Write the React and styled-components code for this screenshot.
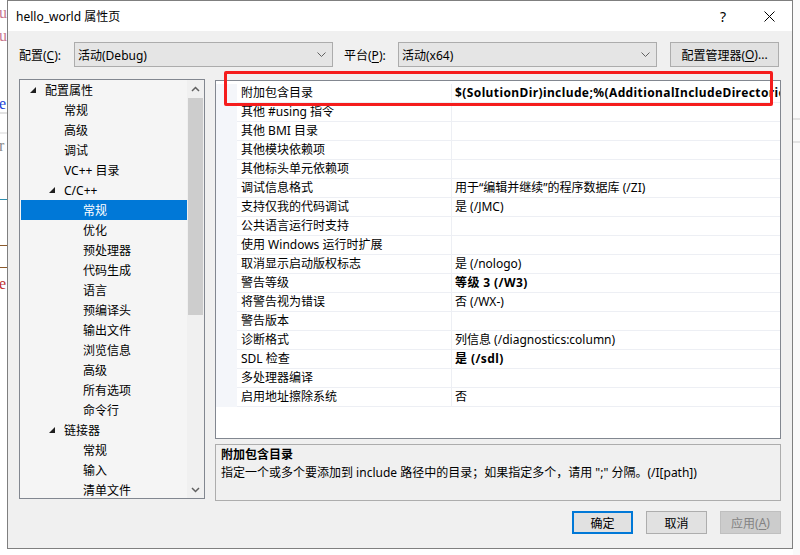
import React from 'react';
import styled, { createGlobalStyle } from 'styled-components';

const GlobalStyle = createGlobalStyle`
  html, body { margin: 0; padding: 0; background: #fff; }
  body {
    font-family: "Noto Sans", "Noto Sans CJK SC", sans-serif;
    font-size: 12px;
    color: #000;
  }
`;

const Screen = styled.div`
  display: flex;
  width: 800px;
  height: 555px;
  overflow: hidden;
  background: #fff;
`;

/* slivers of the editor window peeking out on both sides */
const EditorEdge = styled.div`
  width: 7px;
  flex: none;
  overflow: hidden;
  display: flex;
  flex-direction: column;
  background: ${p => p.$bg || '#fff'};
`;

const EdgeLine = styled.div`
  flex: none;
  height: ${p => p.$h}px;
  line-height: ${p => p.$h}px;
  background: ${p => p.$bg || 'transparent'};
  color: ${p => p.$color || '#000'};
  font-family: "Liberation Serif", serif;
  font-size: 16px;
  white-space: nowrap;
  text-indent: -1px;
`;

const Dialog = styled.div`
  width: 786px;
  height: 549px;
  flex: none;
  box-sizing: border-box;
  border: 1px solid #7f7f7f;
  background: #f0f0f0;
  display: flex;
  flex-direction: column;
`;

const TitleBar = styled.div`
  height: 30px;
  flex: none;
  background: #fff;
  display: flex;
  align-items: center;
  padding-left: 8px;
`;

const Title = styled.div`
  flex: 1;
  font-size: 12px;
`;

const TitleButton = styled.div`
  width: 46px;
  height: 30px;
  display: flex;
  align-items: center;
  justify-content: center;
  font-size: 14px;
`;

const Body = styled.div`
  flex: 1;
  display: flex;
  flex-direction: column;
  padding: 11px 11px 14px 11px;
`;

const ConfigRow = styled.div`
  display: flex;
  align-items: center;
  height: 25px;
`;

const FieldLabel = styled.div`
  width: ${p => p.$w}px;
  flex: none;
  margin-left: ${p => p.$gap || 0}px;
`;

const Combo = styled.div`
  width: 259px;
  height: 25px;
  box-sizing: border-box;
  border: 1px solid #acacac;
  background: #e5e5e5;
  display: flex;
  align-items: center;
  justify-content: space-between;
  padding: 0 6px 0 3px;
`;

const PushButton = styled.div`
  width: ${p => p.$w}px;
  height: ${p => p.$h || 23}px;
  box-sizing: border-box;
  margin-left: ${p => p.$gap || 0}px;
  display: flex;
  align-items: center;
  justify-content: center;
  background: ${p => (p.$disabled ? '#cccccc' : '#e1e1e1')};
  color: ${p => (p.$disabled ? '#838383' : '#000')};
  border: ${p => (p.$default ? '2px solid #0078d7' : p.$disabled ? '1px solid #bfbfbf' : '1px solid #adadad')};
`;

const Key = styled.span`
  text-decoration: underline;
  text-underline-offset: 2px;
`;

const Main = styled.div`
  display: flex;
  gap: 10px;
  height: 422px;
  margin-top: 12px;
`;

const Tree = styled.div`
  width: 186px;
  height: 420px;
  flex: none;
  box-sizing: border-box;
  border: 1px solid #828790;
  background: #f5f5f5;
  display: flex;
  overflow: hidden;
`;

const TreeList = styled.div`
  flex: 1;
  overflow: hidden;
`;

const TreeRow = styled.div`
  height: 20px;
  display: flex;
  align-items: center;
  padding-left: ${p => 10 + p.$level * 19}px;
  margin-left: ${p => (p.$selected ? 1 : 0)}px;
  background: ${p => (p.$selected ? '#0078d7' : 'transparent')};
  color: ${p => (p.$selected ? '#fff' : '#000')};
  white-space: nowrap;
`;

const Toggle = styled.span`
  width: ${p => (p.$selected ? 14 : 15)}px;
  flex: none;
  display: flex;
  align-items: center;
`;

const ScrollBar = styled.div`
  width: 17px;
  flex: none;
  background: #f0f0f0;
  display: flex;
  flex-direction: column;
`;

const ScrollArrow = styled.div`
  height: 17px;
  flex: none;
  display: flex;
  align-items: center;
  justify-content: center;
`;

const ScrollThumb = styled.div`
  height: 217px;
  margin: 1px 1px 0 1px;
  background: #cdcdcd;
`;

const ScrollTrack = styled.div`
  flex: 1;
`;

const RightColumn = styled.div`
  flex: 1;
  position: relative;
  display: flex;
  flex-direction: column;
  gap: 5px;
  padding-top: 1px;
`;

const Grid = styled.div`
  height: 359px;
  flex: none;
  box-sizing: border-box;
  border: 1px solid #828790;
  background: #fff;
  padding-top: 3px;
  overflow: hidden;
`;

const PropRow = styled.div`
  display: grid;
  grid-template-columns: 21px 215px 1fr;
  height: 19px;
`;

const Gutter = styled.div`
  background: #f4f6fa;
`;

const Cell = styled.div`
  box-sizing: border-box;
  height: 19px;
  line-height: 18px;
  border-bottom: 1px solid #edeff4;
  border-right: ${p => (p.$name ? '1px solid #edeff4' : 'none')};
  padding-left: ${p => (p.$name ? 4 : 3)}px;
  font-weight: ${p => (p.$bold ? 700 : 400)};
  letter-spacing: ${p => (p.$bold ? '0.4px' : 'normal')};
  white-space: nowrap;
  overflow: hidden;
`;

const Description = styled.div`
  flex: 1;
  box-sizing: border-box;
  border: 1px solid #adadad;
  padding: 1px 5px 0;
  line-height: 18px;
`;

const DescTitle = styled.div`
  font-weight: 700;
`;

const Highlight = styled.div`
  position: absolute;
  left: 9px;
  top: -8px;
  width: 549px;
  height: 35px;
  box-sizing: border-box;
  border: 3px solid #f51d1d;
  border-radius: 2px;
  pointer-events: none;
`;

const ButtonRow = styled.div`
  display: flex;
  justify-content: flex-end;
  margin-top: 10px;
`;

const Chevron = ({ up }) => (
  <svg width="9" height="6" viewBox="0 0 9 6">
    <path
      d={up ? 'M1 5 L4.5 1.5 L8 5' : 'M1 1 L4.5 4.5 L8 1'}
      fill="none"
      stroke="#606060"
      strokeWidth="1.5"
    />
  </svg>
);

const ComboArrow = () => (
  <svg width="9" height="5" viewBox="0 0 9 5">
    <path d="M0.5 0.5 L4.5 4.5 L8.5 0.5" fill="none" stroke="#606060" strokeWidth="1" />
  </svg>
);

const Expanded = () => (
  <svg width="6" height="6" viewBox="0 0 6 6">
    <polygon points="6,0 6,6 0,6" fill="#1e1e1e" />
  </svg>
);

const CloseGlyph = () => (
  <svg width="11" height="11" viewBox="0 0 11 11">
    <path d="M0.5 0.5 L10.5 10.5 M10.5 0.5 L0.5 10.5" stroke="#000" strokeWidth="1" />
  </svg>
);

const leftEdge = [
  { h: 6 },
  { h: 14, g: 'u', c: '#c8798f' },
  { h: 9 },
  { h: 14, g: 'u', c: '#c8798f' },
  { h: 54 },
  { h: 13, g: 'e', c: '#1a3fd6' },
  { h: 2 },
  { h: 2, bg: '#e2e2e2' },
  { h: 18 },
  { h: 2, bg: '#ebebeb' },
  { h: 6 },
  { h: 12, g: 'r', c: '#8a8a8a' },
  { h: 47 },
  { h: 1, bg: '#2b8fb0' },
  { h: 45 },
  { h: 1, bg: '#8b5a2b' },
  { h: 21 },
  { h: 1, bg: '#8b5a2b' },
  { h: 9 },
  { h: 13, g: 'e', c: '#c03030' },
];

const rightEdge = [
  { h: 118 },
  { h: 2, bg: '#e3e3e3' },
  { h: 21 },
  { h: 2, bg: '#e3e3e3' },
];

const tree = [
  { label: '配置属性', level: 0, open: true },
  { label: '常规', level: 1 },
  { label: '高级', level: 1 },
  { label: '调试', level: 1 },
  { label: 'VC++ 目录', level: 1 },
  { label: 'C/C++', level: 1, open: true },
  { label: '常规', level: 2, selected: true },
  { label: '优化', level: 2 },
  { label: '预处理器', level: 2 },
  { label: '代码生成', level: 2 },
  { label: '语言', level: 2 },
  { label: '预编译头', level: 2 },
  { label: '输出文件', level: 2 },
  { label: '浏览信息', level: 2 },
  { label: '高级', level: 2 },
  { label: '所有选项', level: 2 },
  { label: '命令行', level: 2 },
  { label: '链接器', level: 1, open: true },
  { label: '常规', level: 2 },
  { label: '输入', level: 2 },
  { label: '清单文件', level: 2 },
];

const props = [
  ['附加包含目录', '$(SolutionDir)include;%(AdditionalIncludeDirectories)', true],
  ['其他 #using 指令', ''],
  ['其他 BMI 目录', ''],
  ['其他模块依赖项', ''],
  ['其他标头单元依赖项', ''],
  ['调试信息格式', '用于“编辑并继续”的程序数据库 (/ZI)'],
  ['支持仅我的代码调试', '是 (/JMC)'],
  ['公共语言运行时支持', ''],
  ['使用 Windows 运行时扩展', ''],
  ['取消显示启动版权标志', '是 (/nologo)'],
  ['警告等级', '等级 3 (/W3)', true],
  ['将警告视为错误', '否 (/WX-)'],
  ['警告版本', ''],
  ['诊断格式', '列信息 (/diagnostics:column)'],
  ['SDL 检查', '是 (/sdl)', true],
  ['多处理器编译', ''],
  ['启用地址擦除系统', '否'],
];

export default function App() {
  return (
    <>
      <GlobalStyle />
      <Screen>
        <EditorEdge>
          {leftEdge.map((l, i) => (
            <EdgeLine key={i} $h={l.h} $bg={l.bg} $color={l.c}>{l.g}</EdgeLine>
          ))}
        </EditorEdge>

        <Dialog>
          <TitleBar>
            <Title>hello_world 属性页</Title>
            <TitleButton>?</TitleButton>
            <TitleButton><CloseGlyph /></TitleButton>
          </TitleBar>

          <Body>
            <ConfigRow>
              <FieldLabel $w={55}>配置(<Key>C</Key>):</FieldLabel>
              <Combo>活动(Debug)<ComboArrow /></Combo>
              <FieldLabel $w={54} $gap={11}>平台(<Key>P</Key>):</FieldLabel>
              <Combo>活动(x64)<ComboArrow /></Combo>
              <PushButton $w={109} $h={25} $gap={13}>配置管理器(<Key>O</Key>)...</PushButton>
            </ConfigRow>

            <Main>
              <Tree>
                <TreeList>
                  {tree.map((n, i) => (
                    <TreeRow key={i} $level={n.level} $selected={n.selected}>
                      <Toggle $selected={n.selected}>{n.open && <Expanded />}</Toggle>
                      {n.label}
                    </TreeRow>
                  ))}
                </TreeList>
                <ScrollBar>
                  <ScrollArrow><Chevron up /></ScrollArrow>
                  <ScrollThumb />
                  <ScrollTrack />
                  <ScrollArrow><Chevron /></ScrollArrow>
                </ScrollBar>
              </Tree>

              <RightColumn>
                <Grid>
                  {props.map(([name, value, bold], i) => (
                    <PropRow key={i}>
                      <Gutter />
                      <Cell $name>{name}</Cell>
                      <Cell $bold={bold}>{value}</Cell>
                    </PropRow>
                  ))}
                </Grid>
                <Description>
                  <DescTitle>附加包含目录</DescTitle>
                  <div>指定一个或多个要添加到 include 路径中的目录；如果指定多个，请用 ";" 分隔。(/I[path])</div>
                </Description>
                <Highlight />
              </RightColumn>
            </Main>

            <ButtonRow>
              <PushButton $w={61} $default>确定</PushButton>
              <PushButton $w={61} $gap={13}>取消</PushButton>
              <PushButton $w={61} $gap={13} $disabled>应用(<Key>A</Key>)</PushButton>
            </ButtonRow>
          </Body>
        </Dialog>

        <EditorEdge $bg="#fafafa">
          {rightEdge.map((l, i) => (
            <EdgeLine key={i} $h={l.h} $bg={l.bg} />
          ))}
        </EditorEdge>
      </Screen>
    </>
  );
}
